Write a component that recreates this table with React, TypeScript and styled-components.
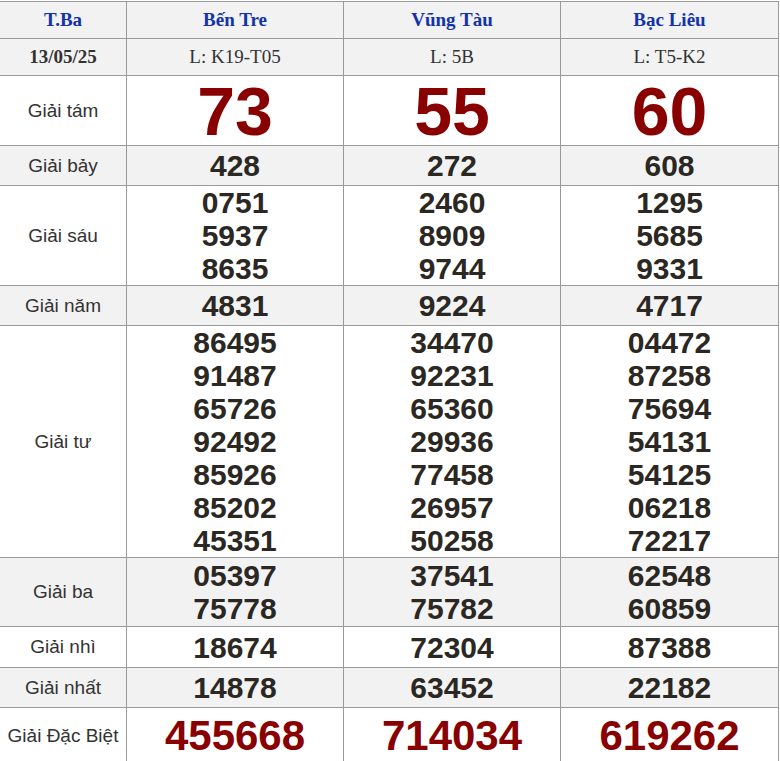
import React from 'react';
import styled, {createGlobalStyle} from 'styled-components';

const GlobalStyle = createGlobalStyle`
  html, body {
    margin: 0;
    padding: 0;
    background: #ffffff;
  }
  body {
    font-family: "Liberation Sans", Arial, sans-serif;
    overflow: hidden;
  }
`;

interface Province {
  name: string;
  code: string;
}

interface Prize {
  label: string;
  height: number;
  kind: 'big' | 'normal' | 'special';
  values: string[][];
}

const provinces: Province[] = [
  {name: 'Bến Tre', code: 'L: K19-T05'},
  {name: 'Vũng Tàu', code: 'L: 5B'},
  {name: 'Bạc Liêu', code: 'L: T5-K2'},
];

const prizes: Prize[] = [
  {label: 'Giải tám', height: 70, kind: 'big', values: [['73'], ['55'], ['60']]},
  {label: 'Giải bảy', height: 40, kind: 'normal', values: [['428'], ['272'], ['608']]},
  {
    label: 'Giải sáu',
    height: 100,
    kind: 'normal',
    values: [
      ['0751', '5937', '8635'],
      ['2460', '8909', '9744'],
      ['1295', '5685', '9331'],
    ],
  },
  {label: 'Giải năm', height: 40, kind: 'normal', values: [['4831'], ['9224'], ['4717']]},
  {
    label: 'Giải tư',
    height: 232,
    kind: 'normal',
    values: [
      ['86495', '91487', '65726', '92492', '85926', '85202', '45351'],
      ['34470', '92231', '65360', '29936', '77458', '26957', '50258'],
      ['04472', '87258', '75694', '54131', '54125', '06218', '72217'],
    ],
  },
  {
    label: 'Giải ba',
    height: 69,
    kind: 'normal',
    values: [
      ['05397', '75778'],
      ['37541', '75782'],
      ['62548', '60859'],
    ],
  },
  {label: 'Giải nhì', height: 41, kind: 'normal', values: [['18674'], ['72304'], ['87388']]},
  {label: 'Giải nhất', height: 40, kind: 'normal', values: [['14878'], ['63452'], ['22182']]},
  {label: 'Giải Đặc Biệt', height: 56, kind: 'special', values: [['455668'], ['714034'], ['619262']]},
];

const Table = styled.table`
  border-collapse: collapse;
  table-layout: fixed;
  width: 779px;
  margin: 1px 0 0 -1px;
`;

const Row = styled.tr<{$shaded: boolean; $h: number}>`
  height: ${p => p.$h}px;
  background: ${p => (p.$shaded ? '#f2f2f2' : '#ffffff')};
`;

const Cell = styled.td`
  border: 1px solid #9a9a9a;
  padding: 0;
  text-align: center;
  vertical-align: middle;
`;

const HeadCell = styled(Cell)`
  font-family: "Liberation Serif", "Times New Roman", serif;
  font-weight: bold;
  font-size: 19px;
  color: #1234a8;
`;

const InfoCell = styled(Cell)<{$bold?: boolean}>`
  font-family: "Liberation Serif", "Times New Roman", serif;
  font-weight: ${p => (p.$bold ? 'bold' : 'normal')};
  font-size: 19px;
  color: #333333;
`;

const LabelCell = styled(Cell)`
  font-size: 19px;
  color: #333333;
  white-space: nowrap;
`;

const NumberCell = styled(Cell)<{$kind: Prize['kind']}>`
  font-weight: bold;
  font-size: ${p => (p.$kind === 'big' ? 68 : p.$kind === 'special' ? 42 : 30)}px;
  line-height: ${p => (p.$kind === 'big' ? 66 : p.$kind === 'special' ? 46 : 33)}px;
  color: ${p => (p.$kind === 'normal' ? '#2b2722' : '#880000')};
`;

const Num = styled.div`
  display: block;
`;

export default function App() {
  return (
    <>
      <GlobalStyle />
      <Table>
        <colgroup>
          <col style={{width: 127}} />
          <col style={{width: 217}} />
          <col style={{width: 217}} />
          <col style={{width: 218}} />
        </colgroup>
        <tbody>
          <Row $shaded $h={37}>
            <HeadCell>T.Ba</HeadCell>
            {provinces.map(p => (
              <HeadCell key={p.name}>{p.name}</HeadCell>
            ))}
          </Row>
          <Row $shaded $h={37}>
            <InfoCell $bold>13/05/25</InfoCell>
            {provinces.map(p => (
              <InfoCell key={p.name}>{p.code}</InfoCell>
            ))}
          </Row>
          {prizes.map((prize, i) => (
            <Row key={prize.label} $shaded={i % 2 === 1} $h={prize.height}>
              <LabelCell>{prize.label}</LabelCell>
              {prize.values.map((vals, j) => (
                <NumberCell key={j} $kind={prize.kind}>
                  {vals.map(v => (
                    <Num key={v}>{v}</Num>
                  ))}
                </NumberCell>
              ))}
            </Row>
          ))}
        </tbody>
      </Table>
    </>
  );
}
